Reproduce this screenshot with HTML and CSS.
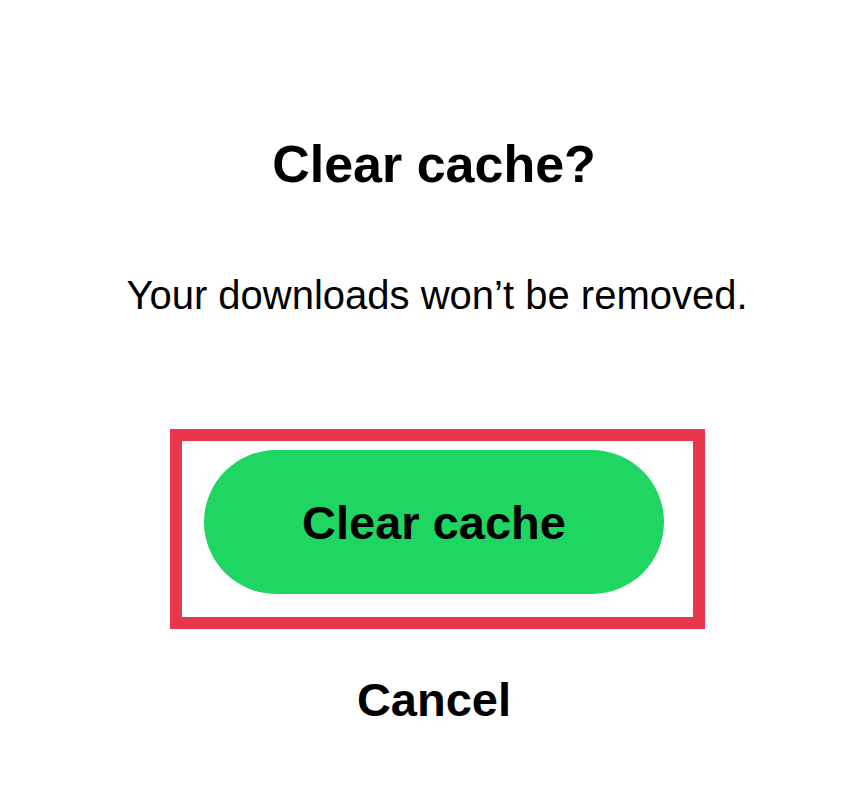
FILE: index.html
```html
<!DOCTYPE html>
<html lang="en">
<head>
    <meta charset="UTF-8">
    <title>Clear cache</title>
    <link rel="stylesheet" href="styles.css">
</head>
<body>
    <div class="dialog">
        <h1 class="title">Clear cache?</h1>
        <p class="message">Your downloads won’t be removed.</p>
        <div class="highlight">
            <button class="primary">Clear cache</button>
        </div>
        <button class="secondary">Cancel</button>
    </div>
</body>
</html>
```

FILE: styles.css
```css
body { margin: 0; background: #fff; font-family: "Liberation Sans", Arial, sans-serif; color: #000; }
.dialog { width: 868px; height: 801px; display: flex; flex-direction: column; align-items: center; padding-top: 134px; box-sizing: border-box; }
.title { margin: 0; font-size: 52px; line-height: 60px; font-weight: bold; }
.message { margin: 78px 0 0; padding-left: 6px; font-size: 40px; line-height: 46px; font-weight: normal; }
.highlight { align-self: flex-start; margin: 111px 0 0 170px; border: 12px solid #e8364b; padding: 9px 29px 23px 22px; }
.primary { display: block; width: 460px; height: 144px; border: none; border-radius: 72px; background: #1fd662; color: #000; font-family: inherit; font-size: 47px; font-weight: bold; padding: 0; }
.secondary { margin-top: 44px; background: none; border: none; padding: 0; font-family: inherit; font-size: 47px; line-height: 54px; font-weight: bold; color: #000; }
```
